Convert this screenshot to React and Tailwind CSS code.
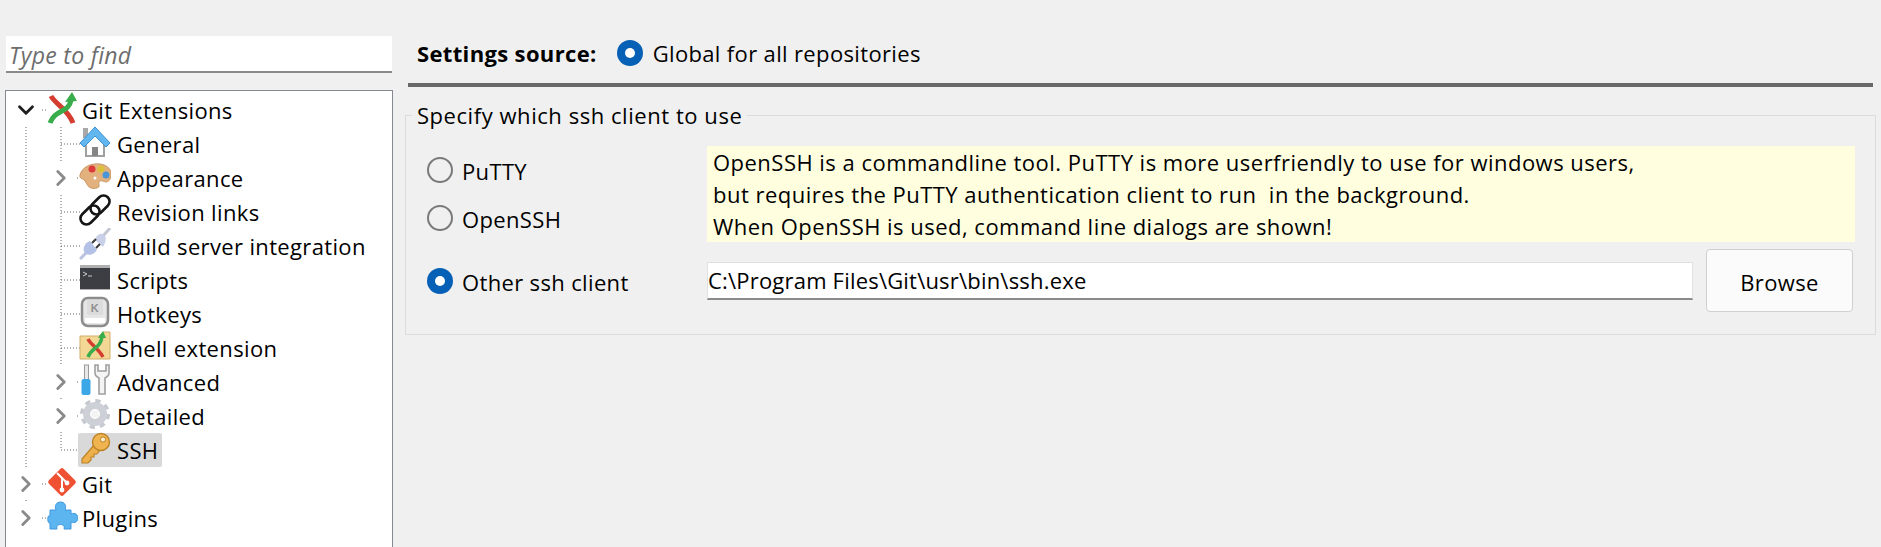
import { ChevronDown, ChevronRight } from 'lucide-react';

function GitExtIcon() {
  return (
    <svg viewBox="0 0 32 32" className="h-8 w-8">
      <path d="M5 4C9 12 22 17 27 31" fill="none" stroke="#d43d2f" strokeWidth="5" />
      <path d="M4 31C9 17 23 21 25 8" fill="none" stroke="#39ad4b" strokeWidth="5" />
      <path d="M19 10L26 0L31 9Z" fill="#39ad4b" />
    </svg>
  );
}

function HouseIcon() {
  return (
    <svg viewBox="0 0 32 32" className="h-8 w-8">
      <rect x="4" y="2" width="5" height="10" fill="#a8a8a8" />
      <path d="M7 15V30H25V15L16 7Z" fill="#fff" stroke="#a0a0a0" strokeWidth="2" />
      <rect x="13" y="21" width="6" height="9" fill="#858585" />
      <path d="M1 17L16 1L31 17L27 21L16 10L5 21Z" fill="#63b7ef" stroke="#3d92d4" strokeWidth="1" />
    </svg>
  );
}

function PaletteIcon() {
  return (
    <svg viewBox="0 0 32 32" className="h-8 w-8">
      <path d="M1 15C3 7 12 3 21 4C29 5 33 10 32 16C31 22 27 23 24 21C21 20 19 22 20 25C21 28 16 29 12 28C9 27 8 24 6 21C4 18 0 19 1 15Z" fill="#e2b17e" stroke="#c99664" strokeWidth="1" />
      <circle cx="13" cy="9" r="3.5" fill="#dd3b3b" />
      <circle cx="22" cy="9" r="3.5" fill="#d9c13c" />
      <circle cx="27" cy="15" r="3.5" fill="#4a94d8" />
      <circle cx="16" cy="18" r="1.5" fill="#fff" />
    </svg>
  );
}

function LinkIcon() {
  return (
    <svg viewBox="0 0 32 32" className="h-8 w-8">
      <rect x="-11" y="-6" width="22" height="12" rx="6" transform="translate(11 21) rotate(-45)" fill="none" stroke="#151515" strokeWidth="2.6" />
      <rect x="-11" y="-6" width="22" height="12" rx="6" transform="translate(21 11) rotate(-45)" fill="none" stroke="#151515" strokeWidth="2.6" />
    </svg>
  );
}

function PlugIcon() {
  return (
    <svg viewBox="0 0 32 32" className="h-8 w-8">
      <path d="M1 31L8 24" stroke="#b9c3df" strokeWidth="3" />
      <path d="M24 8L31 0" stroke="#c4c8d2" strokeWidth="3" />
      <path d="M11 13L18 22C15 27 9 28 6 25C3 22 5 15 11 13Z" fill="#b3c1e6" />
      <path d="M16 12L24 19C27 14 28 9 25 7C22 4 17 7 16 12Z" fill="#c8d1e8" />
      <path d="M13 15L17 11M17 20L21 16" stroke="#3a3a3a" strokeWidth="2" />
    </svg>
  );
}

function TerminalIcon() {
  return (
    <svg viewBox="0 0 32 32" className="h-8 w-8">
      <rect x="1" y="3" width="30" height="25" fill="#b0b0b0" />
      <rect x="1" y="6" width="30" height="21" fill="#3d3d44" />
      <path d="M4 10L8 12L4 14M9 14H13" fill="none" stroke="#c9c9c9" strokeWidth="1" />
    </svg>
  );
}

function HotkeyIcon() {
  return (
    <svg viewBox="0 0 32 32" className="h-8 w-8">
      <rect x="3" y="2" width="26" height="28" rx="6" fill="#e6e6e6" stroke="#8c8c8c" strokeWidth="2.5" />
      <rect x="8" y="4" width="16" height="15" rx="2" fill="#dcdcdc" />
      <text x="16" y="16" textAnchor="middle" fontSize="11" fontWeight="700" fontFamily="Liberation Sans, sans-serif" fill="#8f8f8f">K</text>
      <rect x="6" y="22" width="20" height="5" fill="#fff" />
    </svg>
  );
}

function ShellIcon() {
  return (
    <svg viewBox="0 0 32 32" className="h-8 w-8">
      <path d="M1 6H20L24 2H31V29H1Z" fill="#f3d794" stroke="#d0ae68" strokeWidth="1" />
      <path d="M9 9C12 15 19 18 24 27" fill="none" stroke="#d43d2f" strokeWidth="3.5" />
      <path d="M9 27C13 17 21 19 23 7" fill="none" stroke="#39ad4b" strokeWidth="3.5" />
      <path d="M19 8L24 1L27 8Z" fill="#39ad4b" />
    </svg>
  );
}

function ToolsIcon() {
  return (
    <svg viewBox="0 0 32 32" className="h-8 w-8">
      <rect x="5.5" y="1" width="4" height="15" fill="#e8e8e8" stroke="#9a9a9a" strokeWidth="1" />
      <rect x="2.5" y="15" width="9" height="16" rx="2" fill="#3ca7e6" />
      <path d="M16 1V9C16 12 18 13 20 14V30H26V14C28 13 30 12 30 9V1H27V7H19V1Z" fill="#f4f4f4" stroke="#9f9f9f" strokeWidth="1.6" />
    </svg>
  );
}

function GearIcon() {
  return (
    <svg viewBox="0 0 32 32" className="h-8 w-8">
      <circle cx="16" cy="16" r="12.5" fill="none" stroke="#c6c9d0" strokeWidth="5" strokeDasharray="5 4.8" />
      <circle cx="16" cy="16" r="8.5" fill="none" stroke="#cdd0d6" strokeWidth="7" />
      <rect x="12.5" y="12.5" width="7" height="7" rx="1" fill="#f4f4f4" />
    </svg>
  );
}

function KeyIcon() {
  return (
    <svg viewBox="0 0 32 32" className="h-8 w-8">
      <path d="M16 12L3 27L3 31L9 31L12 28L12 25L15 25L15 22L18 22L21 18Z" fill="#eeb04a" stroke="#bb8226" strokeWidth="1.2" />
      <circle cx="22" cy="10" r="8.5" fill="#efb450" stroke="#bb8226" strokeWidth="1.4" />
      <circle cx="24" cy="7.5" r="2.6" fill="#fbeccb" stroke="#bb8226" strokeWidth="1" />
    </svg>
  );
}

function GitIcon() {
  return (
    <svg viewBox="0 0 32 32" className="h-8 w-8">
      <rect x="5.5" y="5.5" width="21" height="21" rx="2.5" transform="rotate(45 16 16)" fill="#f05133" />
      <path d="M11 7L21 17M16 12V25" fill="none" stroke="#fff" strokeWidth="2" />
      <circle cx="16" cy="24" r="2.4" fill="#fff" />
      <circle cx="21" cy="17" r="2.4" fill="#fff" />
    </svg>
  );
}

function PuzzleIcon() {
  return (
    <svg viewBox="0 0 32 32" className="h-8 w-8">
      <path d="M4 10H10C8 5 11 2 14.500 2C18 2 21 5 19 10H25V14C29 12 32 15 32 18C32 21 29 24 25 22V29H18C19 26 17 24.500 14.500 24.500C12 24.500 10 26 11 29H4V23C1 24 1 14 4 16Z" fill="#5db5f0" stroke="#3f98de" strokeWidth="1" />
    </svg>
  );
}

// page coordinates of the dotted tree guides
const guides = [
  'M26 127V467',
  'M61 127V161',
  'M61 195V365',
  'M61 398V400',
  'M61 432V450',
  'M61 144H80',
  'M61 212H80',
  'M61 246H80',
  'M61 280H80',
  'M61 314H80',
  'M61 348H80',
  'M61 450H80',
  'M77 178H80',
  'M77 382H80',
  'M77 416H80',
  'M42 110H46',
  'M42 484H46',
  'M42 518H46',
  'M26 500V502',
];

const rows = [
  { label: 'Git Extensions', icon: GitExtIcon, level: 0, open: true },
  { label: 'General', icon: HouseIcon, level: 1 },
  { label: 'Appearance', icon: PaletteIcon, level: 1, closed: true },
  { label: 'Revision links', icon: LinkIcon, level: 1 },
  { label: 'Build server integration', icon: PlugIcon, level: 1 },
  { label: 'Scripts', icon: TerminalIcon, level: 1 },
  { label: 'Hotkeys', icon: HotkeyIcon, level: 1 },
  { label: 'Shell extension', icon: ShellIcon, level: 1 },
  { label: 'Advanced', icon: ToolsIcon, level: 1, closed: true },
  { label: 'Detailed', icon: GearIcon, level: 1, closed: true },
  { label: 'SSH', icon: KeyIcon, level: 1, selected: true },
  { label: 'Git', icon: GitIcon, level: 0, closed: true },
  { label: 'Plugins', icon: PuzzleIcon, level: 0, closed: true },
];

function TreeRow({ label, icon: Icon, level, open, closed, selected }) {
  return (
    <div className="relative flex h-[34px] items-center">
      <div className={level === 0 ? 'flex w-10 justify-center' : 'ml-[37px] flex w-9 justify-center'}>
        {open && <ChevronDown size={26} strokeWidth={2.6} className="text-[#1f1f1f]" />}
        {closed && <ChevronRight size={26} strokeWidth={2.6} className="text-[#8a8a8a]" />}
      </div>
      <div className={selected ? '-ml-px flex h-[34px] items-center rounded-[2px] bg-[#d9d9d9] pl-px pr-1' : 'flex items-center'}>
        <span className="-translate-y-0.5">
          <Icon />
        </span>
        <span className={level === 0 ? 'ml-1' : 'ml-1.5'}>{label}</span>
      </div>
    </div>
  );
}

function Radio({ checked }) {
  return checked ? (
    <span className="flex h-[26px] w-[26px] shrink-0 items-center justify-center rounded-full bg-[#0560b6]">
      <span className="h-2.5 w-2.5 rounded-full bg-white" />
    </span>
  ) : (
    <span className="h-[26px] w-[26px] shrink-0 rounded-full border-2 border-[#7a7a7a]" />
  );
}

function RadioRow({ checked, label, className }) {
  return (
    <div className={`flex items-center gap-[9px] ${className}`}>
      <Radio checked={checked} />
      <span className="pt-0.5">{label}</span>
    </div>
  );
}

export default function App() {
  return (
    <div className="flex h-[547px] w-full overflow-hidden bg-[#f0f0f0] font-['Open_Sans',sans-serif] text-[22px] leading-none tracking-[0.35px] text-black">
      <aside className="flex w-[400px] shrink-0 flex-col pl-[5px] pt-9">
        <div className="ml-px flex h-[37px] w-[386px] items-center border-b-2 border-[#8a8a8a] bg-white pl-[3px] pt-1 text-[23px] italic tracking-[0.3px] text-[#6d6d6d]">
          Type to find
        </div>
        <div className="relative mt-[17px] w-[388px] flex-1 border border-b-0 border-[#858a90] bg-white pt-0.5">
          <svg className="absolute left-0 top-0 h-full w-full" fill="none" stroke="#666" strokeDasharray="1 2">
            <g transform="translate(-6 -91)">
              {guides.map((d) => (
                <path key={d} d={d} />
              ))}
            </g>
          </svg>
          {rows.map((row) => (
            <TreeRow key={row.label} {...row} />
          ))}
        </div>
      </aside>

      <main className="flex flex-1 flex-col px-[5px] pt-9">
        <div className="flex h-[34px] items-center pl-3">
          <span className="font-bold">Settings source:</span>
          <span className="ml-5">
            <Radio checked />
          </span>
          <span className="ml-2.5">Global for all repositories</span>
        </div>
        <div className="mx-[3px] mt-[13px] h-1 bg-[#696969]" />

        <fieldset className="mt-3.5 h-[234px] border border-[#dcdcdc]">
          <legend className="ml-[6px] px-[5px] leading-[28px] tracking-[0.55px]">Specify which ssh client to use</legend>
          <div className="flex pl-[21px] pt-[17px]">
            <div className="flex w-[280px] shrink-0 flex-col">
              <RadioRow label="PuTTY" className="h-12" />
              <RadioRow label="OpenSSH" className="h-12" />
              <RadioRow label="Other ssh client" checked className="mt-[7px] h-[63px]" />
            </div>
            <div className="flex w-[1148px] flex-col gap-[7px]">
              <div className="h-24 whitespace-pre bg-[#ffffe0] pl-1.5 leading-[32px] tracking-[0.48px]">
                {'OpenSSH is a commandline tool. PuTTY is more userfriendly to use for windows users,\nbut requires the PuTTY authentication client to run  in the background.\nWhen OpenSSH is used, command line dialogs are shown!'}
              </div>
              <div className="flex items-center gap-[13px]">
                <div className="flex h-[38px] w-[986px] items-center border border-b-2 border-[#e0e0e0] border-b-[#8a8a8a] bg-white tracking-[0.2px]">
                  {'C:\\Program Files\\Git\\usr\\bin\\ssh.exe'}
                </div>
                <button type="button" className="h-[63px] w-[147px] rounded border border-[#d0d0d0] bg-[#fbfbfb] pt-0.5">
                  Browse
                </button>
              </div>
            </div>
          </div>
        </fieldset>
      </main>
    </div>
  );
}
